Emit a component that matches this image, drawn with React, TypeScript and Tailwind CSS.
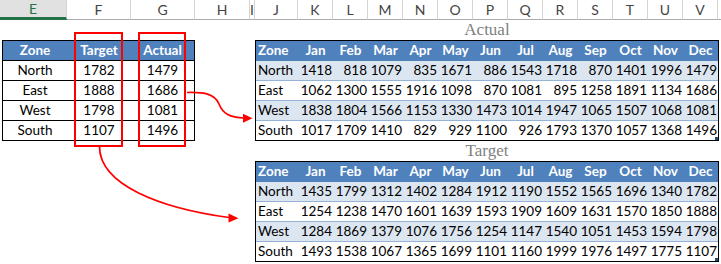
import React from 'react';

const months = ['Jan', 'Feb', 'Mar', 'Apr', 'May', 'Jun', 'Jul', 'Aug', 'Sep', 'Oct', 'Nov', 'Dec'];

const actual: Array<[string, number[]]> = [
  ['North', [1418, 818, 1079, 835, 1671, 886, 1543, 1718, 870, 1401, 1996, 1479]],
  ['East', [1062, 1300, 1555, 1916, 1098, 870, 1081, 895, 1258, 1891, 1134, 1686]],
  ['West', [1838, 1804, 1566, 1153, 1330, 1473, 1014, 1947, 1065, 1507, 1068, 1081]],
  ['South', [1017, 1709, 1410, 829, 929, 1100, 926, 1793, 1370, 1057, 1368, 1496]],
];

const target: Array<[string, number[]]> = [
  ['North', [1435, 1799, 1312, 1402, 1284, 1912, 1190, 1552, 1565, 1696, 1340, 1782]],
  ['East', [1254, 1238, 1470, 1601, 1639, 1593, 1909, 1609, 1631, 1570, 1850, 1888]],
  ['West', [1284, 1869, 1379, 1076, 1756, 1254, 1147, 1540, 1051, 1453, 1594, 1798]],
  ['South', [1493, 1538, 1067, 1365, 1699, 1101, 1160, 1999, 1976, 1497, 1775, 1107]],
];

const summary: Array<[string, number, number]> = [
  ['North', 1782, 1479],
  ['East', 1888, 1686],
  ['West', 1798, 1081],
  ['South', 1107, 1496],
];

// excel column letters with their pixel widths
const columns: Array<[string, string]> = [
  ['E', 'w-[67px]'],
  ['F', 'w-[64px]'],
  ['G', 'w-[64px]'],
  ['H', 'w-[55px]'],
  ['I', 'w-[5px]'],
  ['J', 'w-[43px]'],
  ...['K', 'L', 'M', 'N', 'O', 'P', 'Q', 'R', 'S', 'T', 'U', 'V'].map(
    (c) => [c, 'w-[35px]'] as [string, string]
  ),
];

const ColumnHeader = () => (
  <div className="flex h-[20px] text-[14px]">
    {columns.map(([letter, w]) =>
      letter === 'E' ? (
        <div
          key={letter}
          className={`${w} shrink-0 flex items-center justify-center bg-[#e1e1e1] border-r border-[#d4d4d4] border-b-[3px] border-b-[#217346] text-[#217346]`}
        >
          {letter}
        </div>
      ) : (
        <div
          key={letter}
          className={`${w} shrink-0 flex items-center justify-center border-r border-[#d4d4d4] border-b border-b-[#ababab] text-[#444444] overflow-hidden`}
        >
          {letter}
        </div>
      )
    )}
    <div className="flex-1 border-b border-b-[#ababab]" />
  </div>
);

const SummaryTable = () => (
  <div className="w-[193px] border border-black border-b-0 mt-[20px] ml-[2px]">
    <div className="grid grid-cols-[64px_64px_63px] h-[20px] items-center bg-[#4f81bd] text-white font-bold text-center border-b border-black">
      <div>Zone</div>
      <div>Target</div>
      <div>Actual</div>
    </div>
    {summary.map(([zone, t, a]) => (
      <div
        key={zone}
        className="grid grid-cols-[64px_64px_63px] h-[20px] items-center text-center border-b border-black"
      >
        <div>{zone}</div>
        <div>{t}</div>
        <div>{a}</div>
      </div>
    ))}
  </div>
);

const MonthTable = ({ title, rows }: { title: string; rows: Array<[string, number[]]> }) => (
  <div>
    <div className="h-[20px] leading-[20px] text-center text-[17px] text-[#7f7f7f] font-['Liberation_Serif',serif]">
      {title}
    </div>
    <div className="w-[464px] border border-black border-b-0">
      <div className="grid grid-cols-[42px_repeat(12,35px)] h-[20px] items-center bg-[#4f81bd] text-white font-bold">
        <div className="pl-[2px]">Zone</div>
        {months.map((m) => (
          <div key={m} className="text-center">
            {m}
          </div>
        ))}
      </div>
      {rows.map(([zone, values], i) => (
        <div
          key={zone}
          className={`relative grid grid-cols-[42px_repeat(12,35px)] h-[20px] items-center border-b ${
            i === rows.length - 1 ? 'border-black' : 'border-[#95b3d7]'
          } ${i % 2 === 0 ? 'bg-[#dce6f1]' : 'bg-white'}`}
        >
          <div className="pl-[2px]">{zone}</div>
          {values.map((v, j) => (
            <div key={j} className="text-right pr-[1px]">
              {v}
            </div>
          ))}
          {i === rows.length - 1 && (
            <span className="absolute right-0 bottom-0 w-[3px] h-[3px] bg-[#1f4e79]" />
          )}
        </div>
      ))}
    </div>
  </div>
);

export default function App() {
  return (
    <div className="relative w-[721px] h-[264px] overflow-hidden bg-white text-black text-[13.5px] leading-none font-['Lato',sans-serif]">
      <ColumnHeader />
      <div className="flex items-start">
        <SummaryTable />
        <div className="ml-[60px]">
          <MonthTable title="Actual" rows={actual} />
          <MonthTable title="Target" rows={target} />
        </div>
      </div>

      {/* red callouts */}
      <svg
        className="absolute inset-0 pointer-events-none"
        width={721}
        height={264}
        viewBox="0 0 721 264"
      >
        <rect x={75} y={33} width={47} height={113} fill="none" stroke="#ff0000" strokeWidth={2} />
        <rect x={139} y={33} width={46} height={113} fill="none" stroke="#ff0000" strokeWidth={2} />
        <path
          d="M187 92.5 C205 92 215 94 219 104 C223 114 230 117.5 244 118"
          fill="none"
          stroke="#ff0000"
          strokeWidth={1.75}
        />
        <polygon points="252.5,118.3 243,113.8 243,122.8" fill="#ff0000" />
        <path
          d="M99.5 147 C100 185 160 208 229 217.5"
          fill="none"
          stroke="#ff0000"
          strokeWidth={1.75}
        />
        <polygon points="238.5,218.2 228.5,213.6 228.5,222.6" fill="#ff0000" />
      </svg>
    </div>
  );
}
